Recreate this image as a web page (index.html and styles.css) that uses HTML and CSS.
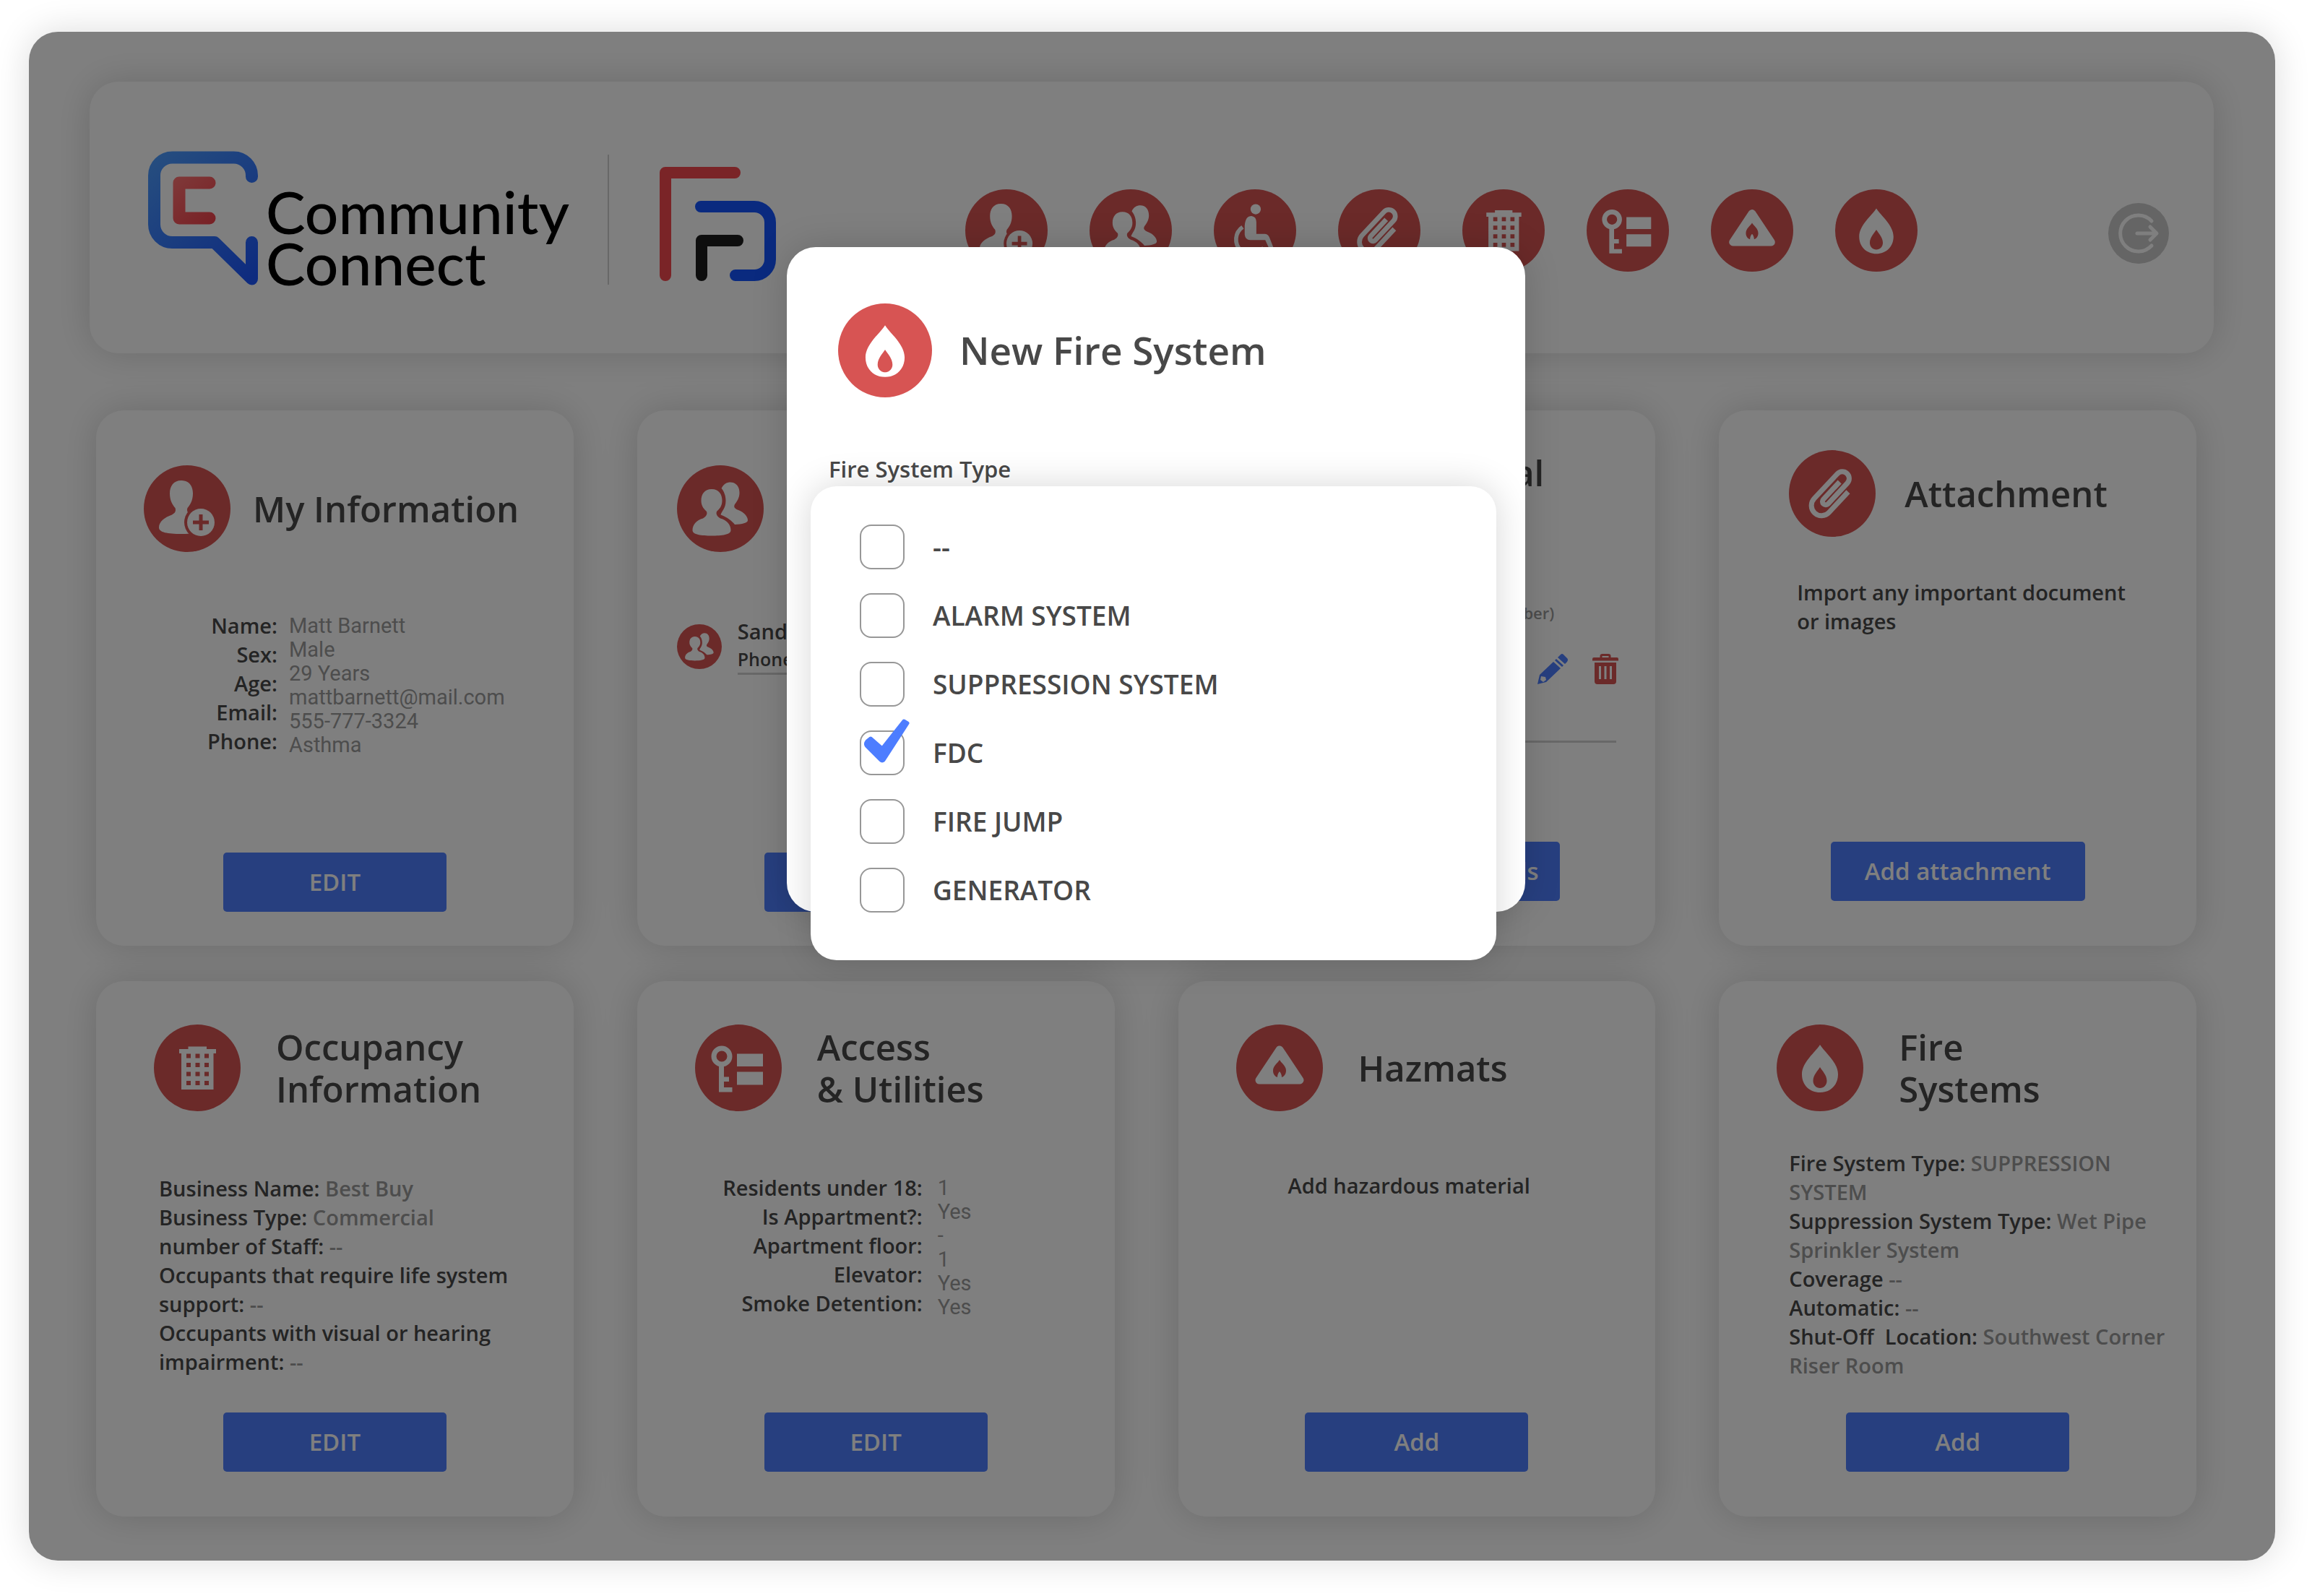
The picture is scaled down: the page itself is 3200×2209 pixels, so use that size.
FILE: index.html
```html
<!DOCTYPE html>
<html lang="en"><head>
<meta charset="UTF-8">
<meta name="viewport" content="width=device-width,initial-scale=1">
<title>Community Connect</title>
<link rel="stylesheet" href="styles.css"></head><body>

<svg class="sprite" aria-hidden="true">
<symbol id="i-user" viewBox="0 0 120 120">
<path d="M52 21C41 21 36 29 36 39C36 49 40 55 43.500 59C45 64 43 66 39 68.500C29 72 21 78 21 86C21 93 33 95 52 95C71 95 83 93 83 86C83 78 75 72 65 68.500C61 66 59 64 60.500 59C64 55 68 49 68 39C68 29 63 21 52 21Z" fill="#fff"/>
<circle cx="79" cy="79" r="23" fill="#d75453"/><circle cx="79" cy="79" r="19" fill="#fff"/>
<path d="M79 68v22M68 79h22" stroke="#d75453" stroke-width="5"/></symbol>
<symbol id="i-users" viewBox="0 0 120 120">
<path d="M48 33C38 33 33.500 40 33.500 49C33.500 57 38 61 41 64C42.500 68 40 71 36 73.500C27 76 21.500 82 21.500 90C21.500 96 34 97.500 48 97.500C62 97.500 74.500 96 74.500 90C74.500 82 69 76 60 73.500C56 71 53.500 68 55 64C58 61 62.500 57 62.500 49C62.500 40 58 33 48 33Z" fill="#fff"/>
<path d="M61.600 32C64 26 69 23.500 74 23.500C82 23.500 86.500 30 86.500 38C86.500 45 83 50 80 54C78 58 80 60 85 62C93 65 98 71 98 76C98 80 90 81.500 80 82C76 77 69 71.500 60.500 68.500C62 63 67.500 60 67.500 49C67.500 42 65 36 61.600 32Z" fill="#fff"/></symbol>
<symbol id="i-chair" viewBox="0 0 120 120">
<circle cx="61" cy="29" r="7.500" fill="#fff"/>
<path d="M45 53C46 43 49 39 55 39Q62 40 62 48V65H74Q79 65 81 70L88 88L94 86L96 91L85 96L75 74H53Q46 74 45 66Z" fill="#fff"/>
<path d="M42 55A22 22 0 1 0 73 85" fill="none" stroke="#fff" stroke-width="6"/></symbol>
<symbol id="i-clip" viewBox="0 0 120 120">
<path transform="translate(58 60) rotate(43)" d="M16 -18V21A14 14 0 0 1 -12 21V-26A9.500 9.500 0 0 1 7 -26V13A4.500 4.500 0 0 1 -2 13V-20" fill="none" stroke="#fff" stroke-width="7"/></symbol>
<symbol id="i-building" viewBox="0 0 120 120">
<path fill-rule="evenodd" fill="#fff" d="M47.500 30.500H73V34H86V40H82.500V90H38V40H35V34H47.500ZM45 40.500v6h6v-6zM57.500 40.500v6h6v-6zM70 40.500v6h6v-6zM45 53v6h6v-6zM57.500 53v6h6v-6zM70 53v6h6v-6zM45 65.500v6h6v-6zM57.500 65.500v6h6v-6zM70 65.500v6h6v-6zM45 78v6h6v-6zM57.500 78v6h6v-6zM70 78v6h6v-6z"/></symbol>
<symbol id="i-key" viewBox="0 0 120 120">
<circle cx="37" cy="44" r="11" fill="none" stroke="#fff" stroke-width="7"/>
<path d="M33 56H40V72.500H47V79H40V87H51.500V93.500H33ZM58 40.500H94V58H58ZM58 65.500H94V83.500H58Z" fill="#fff"/></symbol>
<symbol id="i-hazard" viewBox="0 0 120 120">
<path d="M60 35L88 77H32Z" fill="#fff" stroke="#fff" stroke-width="11" stroke-linejoin="round"/>
<path d="M60 49C63 54 69 57 69 64C69 69 66 72 63 73C63 70 62 67 60 65C58 67 57 70 57 73C54 72 51 69 51 64C51 57 57 54 60 49Z" fill="#d75453"/></symbol>
<symbol id="i-drop" viewBox="0 0 120 120">
<path d="M60 28C66 38 85 52 85 69C85 84 74 94 60 94C46 94 35 84 35 69C35 52 54 38 60 28Z" fill="#fff"/>
<path d="M60 59C63 64 69.500 70 69.500 78C69.500 84 65 88 60 88C55 88 50.500 84 50.500 78C50.500 70 57 64 60 59Z" fill="#d75453"/></symbol>
</svg>

<div class="app">
<header class="topbar">
<div class="brand">
<svg class="brand-mark" viewBox="205 209 152 187" aria-hidden="true">
<defs><linearGradient id="blue" x1="205" y1="209" x2="357" y2="380" gradientUnits="userSpaceOnUse"><stop offset="0" stop-color="#4f9fff"/><stop offset="1" stop-color="#1c56ff"/></linearGradient>
<linearGradient id="red" x1="239" y1="244" x2="298" y2="311" gradientUnits="userSpaceOnUse"><stop offset="0" stop-color="#ff7474"/><stop offset="1" stop-color="#f0404a"/></linearGradient></defs>
<path d="M348.500 244.500V243A25 25 0 0 0 323.500 218H238.500A25 25 0 0 0 213.500 243V310.500A25 25 0 0 0 238.500 335.500H297L348.500 386V335.500" fill="none" stroke="url(#blue)" stroke-width="17" stroke-linecap="round" stroke-linejoin="round"/>
<path d="M290 253H248V302H290" fill="none" stroke="url(#red)" stroke-width="17" stroke-linecap="round" stroke-linejoin="round"/></svg>
<div class="brand-name">Community<br>Connect</div>
</div>
<div class="divider"></div>
<svg class="fp-mark" viewBox="913 230 162 160" fill="none" stroke-width="16" stroke-linecap="round" stroke-linejoin="round" aria-hidden="true">
<path d="M1017 239H921V381" stroke="#f4484e"/><path d="M970 286H1044A22 22 0 0 1 1066 308V359A22 22 0 0 1 1044 381H1018" stroke="#1454ff"/><path d="M1021 333H971V381" stroke="#1c1c1c"/></svg>
<nav class="shortcuts">
<a href="#me" aria-label="My information"><svg class="ico"><use href="#i-user"/></svg></a>
<a href="#contacts" aria-label="Contacts"><svg class="ico"><use href="#i-users"/></svg></a>
<a href="#needs" aria-label="Functional needs"><svg class="ico"><use href="#i-chair"/></svg></a>
<a href="#attachment" aria-label="Attachment"><svg class="ico"><use href="#i-clip"/></svg></a>
<a href="#occupancy" aria-label="Occupancy"><svg class="ico"><use href="#i-building"/></svg></a>
<a href="#access" aria-label="Access and utilities"><svg class="ico"><use href="#i-key"/></svg></a>
<a href="#hazmats" aria-label="Hazmats"><svg class="ico"><use href="#i-hazard"/></svg></a>
<a href="#fire" aria-label="Fire systems"><svg class="ico"><use href="#i-drop"/></svg></a>
</nav>
<button class="logout" aria-label="Log out"><svg viewBox="0 0 84 84" fill="none" stroke="#fff" stroke-width="5" stroke-linecap="round" stroke-linejoin="round"><path d="M60 25A25 25 0 1 0 60 59M40 42H66M58 33L67 42L58 51"/></svg></button>
</header>

<main class="cards">
<section class="card card-low" id="me">
<div class="card-head"><svg class="ico"><use href="#i-user"/></svg><h2>My Information</h2></div>
<div class="facts">
<ul class="labels"><li>Name:</li><li>Sex:</li><li>Age:</li><li>Email:</li><li>Phone:</li></ul>
<ul class="values"><li>Matt Barnett</li><li>Male</li><li>29 Years</li><li>mattbarnett@mail.com</li><li>555-777-3324</li><li>Asthma</li></ul>
</div>
<button class="btn">EDIT</button>
</section>

<section class="card card-low contacts" id="contacts">
<div class="card-head"><svg class="ico"><use href="#i-users"/></svg><h2>Contacts</h2></div>
<div class="contact">
<svg class="ico ico-small"><use href="#i-users"/></svg>
<div class="contact-text"><div>Sandra Barnett</div><div class="contact-phone">Phone: 555-777-3324</div></div>
</div>
<button class="btn">EDIT</button>
</section>

<section class="card card-high needs" id="needs">
<div class="card-head"><svg class="ico"><use href="#i-chair"/></svg><h2>Functional<br>Needs</h2></div>
<div class="need">
<small>(Household member)</small>
<div class="need-actions">
<button aria-label="Edit"><svg class="pencil" viewBox="0 0 42 42" fill="#4e7eff"><path fill-rule="evenodd" d="M0 42L3 29L22 11L32 20L12 39ZM5 31L4 36L8 39L12 36L11 32Z"/><path d="M24 9L26 7L36 16L34 18ZM28 5L32 1Q34-1 36 1L41 6Q43 8 41 11L38 14Z"/></svg></button>
<button aria-label="Delete"><svg class="trash" viewBox="0 0 36 42"><path d="M12 6V3Q12 1.500 14 1.500H22Q24 1.500 24 3V6" fill="none" stroke="#d75453" stroke-width="3"/><path fill="#d75453" fill-rule="evenodd" d="M2 5H34Q36 5 36 7V9.500H0V7Q0 5 2 5ZM3 12H33V38Q33 42 29 42H7Q3 42 3 38ZM9 17V35H12V17ZM16.500 17V35H19.500V17ZM24 17V35H27V17Z"/></svg></button>
</div>
</div>
<button class="btn btn-wide">Add functional needs</button>
</section>

<section class="card card-high attachment" id="attachment">
<div class="card-head"><svg class="ico"><use href="#i-clip"/></svg><h2>Attachment</h2></div>
<p class="text">Import any important document or images</p>
<button class="btn btn-mid">Add attachment</button>
</section>

<section class="card" id="occupancy">
<div class="card-head"><svg class="ico"><use href="#i-building"/></svg><h2>Occupancy<br>Information</h2></div>
<div class="text">
<p>Business Name: <span>Best Buy</span></p>
<p>Business Type: <span>Commercial</span></p>
<p>number of Staff: <span>--</span></p>
<p>Occupants that require life system support: <span>--</span></p>
<p>Occupants with visual or hearing impairment: <span>--</span></p>
</div>
<button class="btn">EDIT</button>
</section>

<section class="card access" id="access">
<div class="card-head"><svg class="ico"><use href="#i-key"/></svg><h2>Access<br>&amp; Utilities</h2></div>
<div class="facts">
<ul class="labels"><li>Residents under 18:</li><li>Is Appartment?:</li><li>Apartment floor:</li><li>Elevator:</li><li>Smoke Detention:</li></ul>
<ul class="values"><li>1</li><li>Yes</li><li>-</li><li>1</li><li>Yes</li><li>Yes</li></ul>
</div>
<button class="btn">EDIT</button>
</section>

<section class="card hazmats" id="hazmats">
<div class="card-head"><svg class="ico"><use href="#i-hazard"/></svg><h2>Hazmats</h2></div>
<p class="text">Add hazardous material</p>
<button class="btn">Add</button>
</section>

<section class="card fire" id="fire">
<div class="card-head"><svg class="ico"><use href="#i-drop"/></svg><h2>Fire<br>Systems</h2></div>
<div class="text">
<p>Fire System Type: <span>SUPPRESSION SYSTEM</span></p>
<p>Suppression System Type: <span>Wet Pipe Sprinkler System</span></p>
<p>Coverage <span>--</span></p>
<p>Automatic: <span>--</span></p>
<p>Shut-Off&nbsp; Location: <span>Southwest Corner Riser Room</span></p>
</div>
<button class="btn">Add</button>
</section>
</main>
<div class="backdrop"></div>
</div>

<div class="modal-layer">
<div class="modal" role="dialog" aria-labelledby="modal-title">
<div class="modal-head"><svg class="ico ico-large"><use href="#i-drop"/></svg><h1 id="modal-title">New Fire System</h1></div>
<div class="field-label" id="type-label">Fire System Type</div>
<div class="menu" role="group" aria-labelledby="type-label">
<label><span class="box"><input type="checkbox"></span>--</label>
<label><span class="box"><input type="checkbox"></span>ALARM SYSTEM</label>
<label><span class="box"><input type="checkbox"></span>SUPPRESSION SYSTEM</label>
<label><span class="box"><input type="checkbox" checked><svg class="tick" viewBox="0 0 64 62"><path d="M4 31L9 27L25 41L55 3L60 6L27 57Q25 59 23 57L4 38Q1 35 4 31Z" fill="#4d7dff" stroke="#4d7dff" stroke-width="5" stroke-linejoin="round"/></svg></span>FDC</label>
<label><span class="box"><input type="checkbox"></span>FIRE JUMP</label>
<label><span class="box"><input type="checkbox"></span>GENERATOR</label>
</div>
</div>
</div>
</body></html>
```
FILE: styles.css
```css
*{box-sizing:border-box}
body{margin:0;padding:44px 51px 49px 40px;background:#fff;color:#484848;font-family:"Open Sans",sans-serif;font-size:29px;font-weight:600;line-height:40px}
h1,h2,p,ul{margin:0;padding:0;font-weight:600}
ul{list-style:none}
button{font:inherit;border:0;padding:0;cursor:pointer}
svg{display:block}
.sprite{position:absolute;width:0;height:0}

.app{position:relative;padding:69px 85px 61px 84px;border-radius:40px;background:#fff;box-shadow:0 0 50px rgba(0,0,0,.14)}
.backdrop{position:absolute;inset:0;border-radius:40px;background:rgba(0,0,0,.5)}

/* header */
.topbar{display:flex;align-items:flex-start;min-height:376px;padding:96px 62px 0 81px;border-radius:40px;background:#fff;box-shadow:0 0 50px rgba(0,0,0,.16)}
.brand{display:flex;flex:0 0 636px;gap:11px}
.brand-mark{width:152px;height:187px}
.brand-name{padding-top:48px;color:#000;font-family:Lato,sans-serif;font-size:82px;font-weight:500;line-height:71px}
.divider{width:2px;height:180px;margin-top:5px;background:#d0d0d0}
.fp-mark{width:162px;height:160px;margin:21px 0 0 70px}
.shortcuts{display:flex;gap:58px;margin:53px 0 0 261px}
.ico{flex:none;width:120px;height:120px;border-radius:50%;background:#d75453}
.shortcuts .ico{width:114px;height:114px}
.ico-small{width:62px;height:62px}
.ico-large{width:130px;height:130px}
.logout{width:84px;height:84px;margin:72px 0 0 auto;border-radius:50%;background:#cacaca}

/* cards */
.cards{display:grid;grid-template-columns:repeat(4,1fr);gap:49px 88px;margin-top:79px;padding:0 24px 0 9px}
.card{display:flex;flex-direction:column;min-height:741px;padding:60px 0 62px;border-radius:38px;background:#fff;box-shadow:0 0 50px rgba(0,0,0,.16)}
.card-low{padding:76px 0 47px}
.card-high{padding:55px 0 62px}
.card-head{display:flex;align-items:center;gap:49px;padding-left:80px}
.card-head h2{font-size:49px;line-height:58px}
.card-low .card-head{gap:31px;padding-left:66px}
.contacts .card-head{padding-left:55px}
.needs .card-head{justify-content:flex-end;gap:40px;padding:0 154px 0 0}
.attachment .card-head{gap:40px;padding-left:97px}

.text{margin-top:87px;padding:0 76px 0 87px}
.text span{color:#9a9a9a}
.attachment .text{margin-top:57px;padding:0 80px 0 108px}
.hazmats .text{margin-top:83px;padding:0 76px 0 152px}
.fire .text{margin-top:52px;padding:0 36px 0 97px}

.facts{display:flex;gap:16px;margin-top:82px}
.labels{width:251px;text-align:right}
.values{padding-top:4px;color:#9a9a9a;font-family:Roboto,sans-serif;font-size:29px;font-weight:400;line-height:33px}
.access .facts{gap:21px;margin-top:86px}
.access .labels{width:395px}

.btn{width:309px;height:82px;margin-top:auto;align-self:center;border-radius:5px;background:#4e7eff;color:#fff;font-size:33px}
.btn-mid{width:352px}
.btn-wide{width:397px}

.contact{display:flex;align-items:center;gap:22px;margin:91px 55px 0}
.contact-text{flex:1;border-bottom:3px solid #d0d0d0;line-height:38px;white-space:nowrap}
.contact-phone{font-size:25px}
.need{margin:90px 54px 0;padding-bottom:78px;border-bottom:3px solid #d0d0d0}
.need small{display:block;padding-right:86px;color:#9a9a9a;font-size:22px;line-height:30px;text-align:right}
.need-actions{display:flex;justify-content:flex-end;gap:34px;margin:42px -3px 0 0}
.need-actions button{background:none}
.pencil{width:42px;height:42px}
.trash{width:36px;height:42px}

/* dialog */
.modal-layer{position:absolute;top:342px;left:0;right:0;display:flex;justify-content:center}
.modal{position:relative;width:1022px;min-height:920px;padding:78px 62px;border-radius:40px;background:#fff;box-shadow:0 0 50px rgba(0,0,0,.16)}
.modal-head{display:flex;align-items:center;gap:38px;padding-left:9px}
.modal-head h1{font-size:53px;line-height:72px}
.field-label{margin:79px 0 0 -4px;font-size:31px}
.menu{position:absolute;top:331px;left:33px;right:40px;padding:36px 68px 50px;border-radius:36px;background:#fff;box-shadow:0 0 50px rgba(0,0,0,.16)}
.menu label{display:flex;align-items:center;gap:39px;height:95px;font-size:37px}
.box{position:relative;width:62px;height:62px}
.box input{appearance:none;display:block;width:62px;height:62px;margin:0;border:2px solid #979797;border-radius:16px;background:#fff}
.tick{position:absolute;left:6px;top:-16px;width:64px;height:62px}

@media (max-width:1600px){.cards{grid-template-columns:repeat(2,1fr)}.topbar{flex-wrap:wrap}}
```
